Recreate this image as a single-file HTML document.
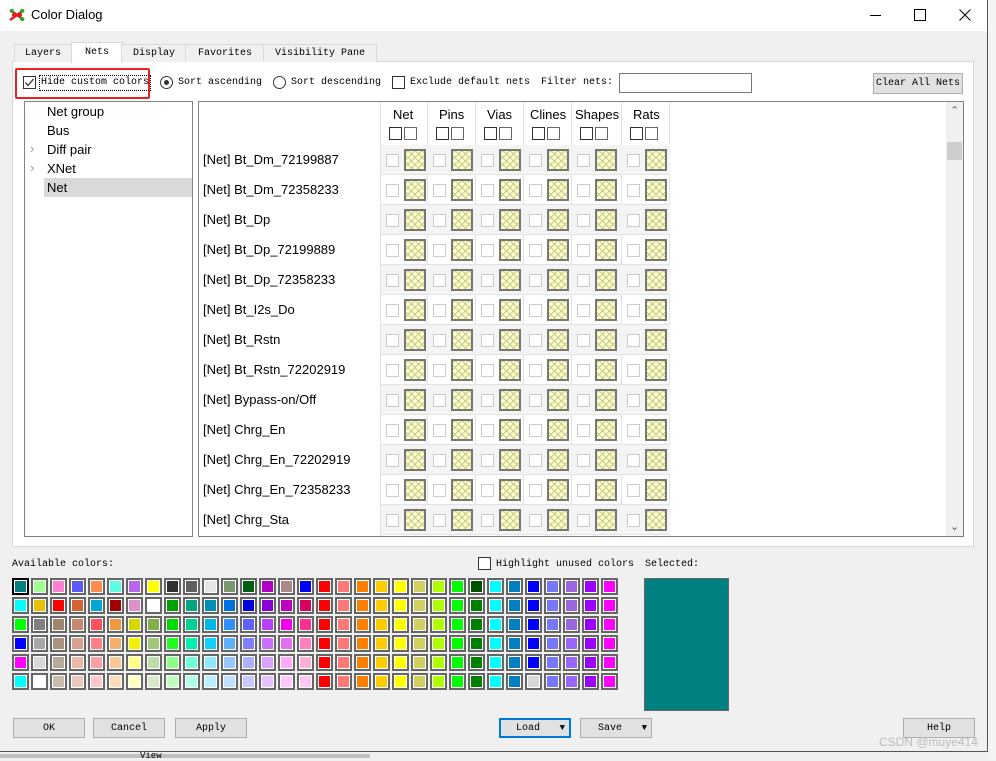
<!DOCTYPE html>
<html><head><meta charset="utf-8"><style>
body{margin:0;width:996px;height:759px;background:#f0f0f0;position:relative;overflow:hidden;font-family:"Liberation Mono",monospace;font-size:10px;color:#000;white-space:nowrap}
.a{position:absolute;white-space:nowrap}
.sans{font-family:"Liberation Sans","Noto Sans CJK SC",sans-serif;font-size:13px}
.btn{position:absolute;height:20px;border:1px solid #adadad;background:#e1e1e1;box-sizing:border-box;display:flex;align-items:center;justify-content:center}
.cb{position:absolute;width:13px;height:13px;border:1px solid #333;background:#fff;box-sizing:border-box}
.hatch{position:absolute;width:22px;height:22px;box-sizing:border-box;border:2px solid #777;background-color:#ffffc0;background-image:repeating-linear-gradient(45deg,transparent 0 4px,#c8c8a0 4px 5px),repeating-linear-gradient(-45deg,transparent 0 4px,#c8c8a0 4px 5px)}
.lcb{position:absolute;width:13px;height:13px;border:1px solid #ccc;background:#fff;box-sizing:border-box}
.sw{position:absolute;width:17px;height:17px;box-sizing:border-box;border:2px solid #666;outline:1px solid #fff;outline-offset:-3px}
</style></head><body>
<div class="a" style="left:0;top:0;width:988px;height:31px;background:#fff"></div>
<div class="a" style="left:987px;top:0;width:1px;height:752px;background:#555"></div>
<div class="a" style="left:0;top:751px;width:988px;height:1px;background:#555"></div>
<div class="a" style="left:988px;top:0;width:8px;height:759px;background:#f4f4f4"></div>
<svg class="a" style="left:9px;top:7px" width="16" height="16"><path d="M1 3L15 13M1 13L15 3M3 8h10" stroke="#e02020" stroke-width="2.5"/><circle cx="3" cy="4" r="2" fill="#20b020"/><circle cx="13" cy="12" r="2" fill="#20b020"/><circle cx="13" cy="4" r="2" fill="#20b020"/></svg>
<div class="a sans" style="left:31px;top:7px;font-size:13px">Color Dialog</div>
<div class="a" style="left:870px;top:15px;width:11px;height:1px;background:#000"></div>
<div class="a" style="left:914px;top:9px;width:10px;height:10px;border:1px solid #000"></div>
<svg class="a" style="left:959px;top:9px" width="12" height="12"><path d="M0.5 0.5L11.5 11.5M11.5 0.5L0.5 11.5" stroke="#000"/></svg>
<div class="a" style="left:12px;top:61px;width:962px;height:486px;border:1px solid #d9d9d9;background:#fff;box-sizing:border-box"></div>
<div class="a" style="left:14px;top:44px;width:56px;height:17px;border:1px solid #d9d9d9;border-bottom:none;background:#f0f0f0;text-align:center;line-height:17px">Layers</div>
<div class="a" style="left:71px;top:42px;width:50px;height:20px;border:1px solid #d9d9d9;border-bottom:none;background:#fff;text-align:center;line-height:19px">Nets</div>
<div class="a" style="left:121px;top:44px;width:64px;height:17px;border:1px solid #d9d9d9;border-bottom:none;background:#f0f0f0;text-align:center;line-height:17px">Display</div>
<div class="a" style="left:185px;top:44px;width:78px;height:17px;border:1px solid #d9d9d9;border-bottom:none;background:#f0f0f0;text-align:center;line-height:17px">Favorites</div>
<div class="a" style="left:263px;top:44px;width:112px;height:17px;border:1px solid #d9d9d9;border-bottom:none;background:#f0f0f0;text-align:center;line-height:17px">Visibility Pane</div>
<div class="a" style="left:15px;top:68px;width:135px;height:31px;border:2px solid #f02020;border-radius:2px;box-sizing:border-box"></div>
<div class="cb" style="left:23px;top:76px;border-color:#333"></div>
<svg class="a" style="left:24px;top:77px" width="11" height="11"><path d="M1.5 5.5L4 8.5L9.5 2" stroke="#333" fill="none" stroke-width="1.3"/></svg>
<div class="a" style="left:39px;top:75px;border:1px dotted #000;padding:0 1px;line-height:14px">Hide custom colors</div>
<div class="a" style="left:160px;top:76px;width:13px;height:13px;border:1px solid #333;border-radius:50%;box-sizing:border-box"></div>
<div class="a" style="left:164px;top:80px;width:5px;height:5px;border-radius:50%;background:#333"></div>
<div class="a" style="left:178px;top:77px">Sort ascending</div>
<div class="a" style="left:273px;top:76px;width:13px;height:13px;border:1px solid #333;border-radius:50%;box-sizing:border-box"></div>
<div class="a" style="left:291px;top:77px">Sort descending</div>
<div class="cb" style="left:392px;top:76px"></div>
<div class="a" style="left:410px;top:77px">Exclude default nets</div>
<div class="a" style="left:541px;top:77px">Filter nets:</div>
<div class="a" style="left:619px;top:73px;width:133px;height:20px;border:1px solid #7a7a7a;box-sizing:border-box;background:#fff"></div>
<div class="btn" style="left:873px;top:73px;width:90px;height:21px">Clear All Nets</div>
<div class="a" style="left:24px;top:101px;width:169px;height:436px;border:1px solid #828282;box-sizing:border-box;background:#fff"></div>
<div class="a" style="left:44px;top:178px;width:148px;height:19px;background:#d9d9d9"></div>
<div class="a sans" style="left:47px;top:104px">Net group</div>
<div class="a sans" style="left:47px;top:123px">Bus</div>
<div class="a sans" style="left:47px;top:142px">Diff pair</div>
<div class="a sans" style="left:47px;top:161px">XNet</div>
<div class="a sans" style="left:47px;top:180px">Net</div>
<div class="a sans" style="left:30px;top:141px;color:#999">›</div>
<div class="a sans" style="left:30px;top:160px;color:#999">›</div>
<div class="a" style="left:198px;top:101px;width:766px;height:436px;border:1px solid #828282;box-sizing:border-box;background:#fff;overflow:hidden" id="g">
<div class="a" style="left:747px;top:0;width:17px;height:434px;background:#f0f0f0"></div>
<div class="a" style="left:748px;top:40px;width:15px;height:18px;background:#cdcdcd"></div>
<div class="a sans" style="left:751px;top:2px;font-size:11px;color:#606060">⌃</div>
<div class="a sans" style="left:751px;top:418px;font-size:11px;color:#606060">⌄</div>
</div>
<div class="a sans" style="left:203px;top:152px">[Net] Bt_Dm_72199887</div>
<div class="a sans" style="left:203px;top:182px">[Net] Bt_Dm_72358233</div>
<div class="a sans" style="left:203px;top:212px">[Net] Bt_Dp</div>
<div class="a sans" style="left:203px;top:242px">[Net] Bt_Dp_72199889</div>
<div class="a sans" style="left:203px;top:272px">[Net] Bt_Dp_72358233</div>
<div class="a sans" style="left:203px;top:302px">[Net] Bt_I2s_Do</div>
<div class="a sans" style="left:203px;top:332px">[Net] Bt_Rstn</div>
<div class="a sans" style="left:203px;top:362px">[Net] Bt_Rstn_72202919</div>
<div class="a sans" style="left:203px;top:392px">[Net] Bypass-on/Off</div>
<div class="a sans" style="left:203px;top:422px">[Net] Chrg_En</div>
<div class="a sans" style="left:203px;top:452px">[Net] Chrg_En_72202919</div>
<div class="a sans" style="left:203px;top:482px">[Net] Chrg_En_72358233</div>
<div class="a sans" style="left:203px;top:512px">[Net] Chrg_Sta</div>
<div class="a sans" style="left:393px;top:107px">Net</div>
<div class="a sans" style="left:439px;top:107px">Pins</div>
<div class="a sans" style="left:487px;top:107px">Vias</div>
<div class="a sans" style="left:530px;top:107px">Clines</div>
<div class="a sans" style="left:575px;top:107px">Shapes</div>
<div class="a sans" style="left:633px;top:107px">Rats</div>
<div class="a" style="left:12px;top:559px">Available colors:</div>
<div class="cb" style="left:478px;top:557px"></div>
<div class="a" style="left:496px;top:559px">Highlight unused colors</div>
<div class="a" style="left:645px;top:559px">Selected:</div>
<div class="a" style="left:644px;top:578px;width:85px;height:133px;background:#008080;border:1px solid #666;box-sizing:border-box"></div>
<div id="pal"></div>
<div class="btn" style="left:13px;top:718px;width:72px">OK</div>
<div class="btn" style="left:93px;top:718px;width:72px">Cancel</div>
<div class="btn" style="left:175px;top:718px;width:72px">Apply</div>
<div class="btn" style="left:499px;top:718px;width:72px;border:2px solid #0078d7;justify-content:flex-start;padding-left:15px">Load<span style="position:absolute;right:4px;font-size:9px">▼</span></div>
<div class="btn" style="left:580px;top:718px;width:72px;justify-content:flex-start;padding-left:17px">Save<span style="position:absolute;right:4px;font-size:9px">▼</span></div>
<div class="btn" style="left:903px;top:718px;width:72px">Help</div>
<div class="a sans" style="left:879px;top:735px;color:#bbb;font-size:12px">CSDN @muye414</div>
<div class="a" style="left:0;top:754px;width:370px;height:4px;background:#c0c0c0"></div>
<div class="a" style="left:140px;top:751px;font-size:9px">View</div>
<script>
var g=document.getElementById('g');var h='';
var cols=[182,229,277,325,373,423,471];
for(var i=0;i<7;i++)h+='<div class="a" style="left:'+(cols[i]-1)+'px;top:0;width:1px;height:434px;background:#e3e3e3"></div>';
for(var c=0;c<6;c++){var x=cols[c]+8;h+='<div class="cb" style="left:'+x+'px;top:25px"></div><div class="cb" style="left:'+(x+15)+'px;top:25px;border-color:#666"></div>';}
for(var r=0;r<14;r++){var y=43+r*30;if(r%2==0)h+='<div class="a" style="left:'+cols[0]+'px;top:'+y+'px;width:'+(cols[6]-cols[0])+'px;height:30px;background:#f4f4f4"></div>';
h+='<div class="a" style="left:'+cols[0]+'px;top:'+(y+29)+'px;width:'+(cols[6]-cols[0])+'px;height:1px;background:#e3e3e3"></div>';
for(var c=0;c<6;c++){var x=cols[c];h+='<div class="lcb" style="left:'+(x+5)+'px;top:'+(y+9)+'px"></div><div class="hatch" style="left:'+(x+23)+'px;top:'+(y+4)+'px"></div>';}}
g.innerHTML+=h;
var P=[
['008080','a0ff90','ff80d0','5a5aff','ff8a50','5affe0','b866f0','ffff00','303030','606060','e6e6e6','789870','006010','b000c8','a88888','0000ff'],
['00ffff','e8c000','ff0000','d46430','00a8d8','a00000','e090c8','ffffff','00a000','00a880','0090b8','0070e0','0000e0','8c00d8','c000c0','d80060'],
['00ff00','808080','a08470','c88870','ff5060','f09840','d8d800','80b048','00d800','00d090','00b8e8','3090ff','6060ff','b840ff','f000f0','ff3090'],
['0000ff','a8a8a8','a89480','d8a090','ff8088','f4b070','f0f000','a0c878','20ff20','00f0b0','10d0ff','60b0ff','8080ff','c870ff','e070f0','ff80c0'],
['ff00ff','d8d8d8','b8a898','e8b8a8','ffa0a8','f8c898','ffff88','c0dca8','90ff88','70ffd8','90e8ff','98c8ff','b0b0ff','dca0ff','ffa8ff','ffb0d8'],
['00ffff','ffffff','c8bcaa','ecc8bc','ffc8cc','fcdcb8','ffffc0','d8e8c8','c0ffc0','b0ffe8','b8f0ff','c0e0ff','c8c8ff','e8c0ff','ffc8ff','ffc8f0']];
var R=['ff0000','ff7777','ff8000','ffcc00','ffff00','d0d060','b0ff00','00ff00','008000','00ffff','0080c0','0000ff','7777ff','9966dd','9900ff','ff00ff'];
var s='';
for(var r=0;r<6;r++)for(var c=0;c<32;c++){var col=c<16?P[r][c]:R[c-16];
if(c==24&&r==0)col='005000';if(c==27&&r==5)col='d8d8d8';if(c==29&&r>=3)col='9966ff';
var st=(r==0&&c==0)?'border-color:#000;':'';
s+='<div class="sw" style="left:'+(12+c*19)+'px;top:'+(578+r*19)+'px;background:#'+col+';'+st+'"></div>';}
document.getElementById('pal').innerHTML=s;
</script>
</body></html>
